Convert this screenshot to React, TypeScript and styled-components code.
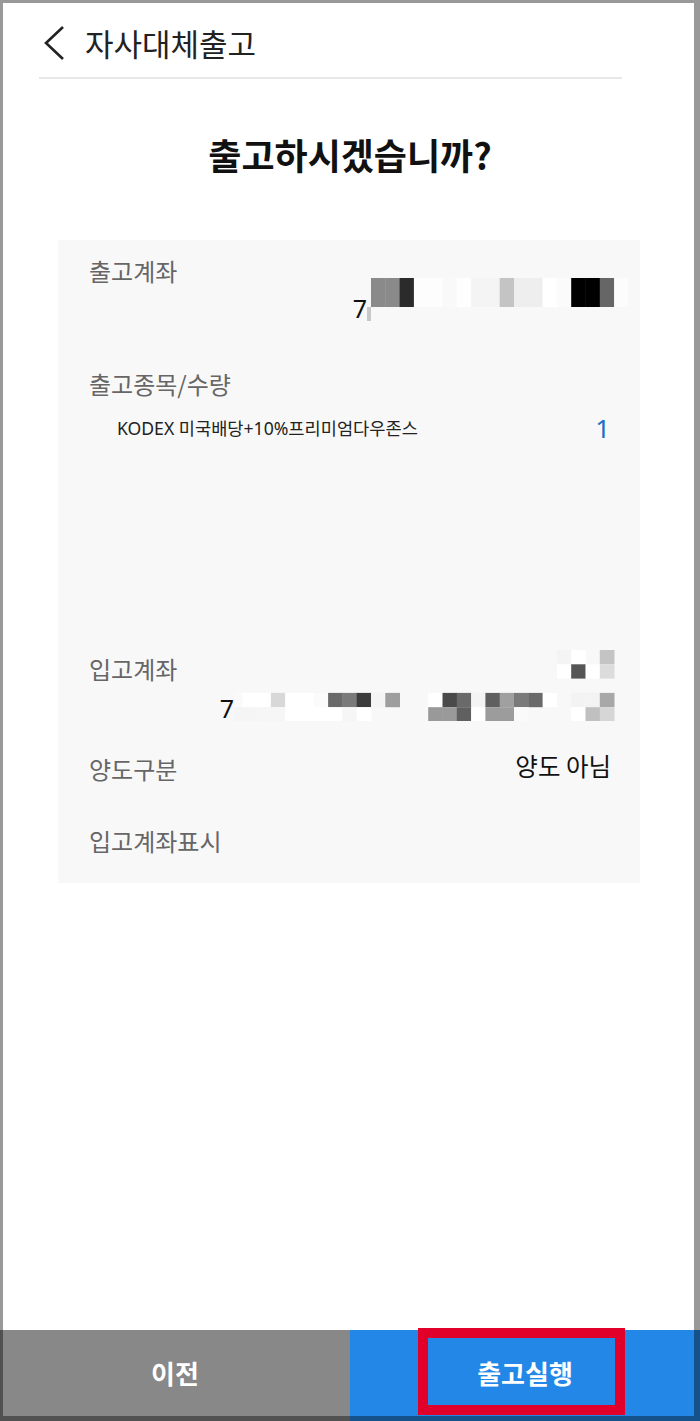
import styled, { createGlobalStyle } from 'styled-components';

const GlobalStyle = createGlobalStyle`
  html, body {
    margin: 0;
    padding: 0;
    background: #ffffff;
  }
  body {
    font-family: 'Noto Sans', 'Noto Sans CJK KR', sans-serif;
    color: #222222;
  }
  * {
    box-sizing: border-box;
  }
`;

type Cell = [number, number, string];

// censor mosaics, cells on a 14.3px grid
const CELL = 14.3;

const sentMosaic: Cell[] = [
  [4, 0, '#8a8a8a'],
  [4 + CELL, 0, '#8a8a8a'],
  [4 + CELL * 2, 0, '#2b2b2b'],
  [4 + CELL * 3, 0, '#fdfdfd'],
  [4 + CELL * 4, 0, '#fdfdfd'],
  [4 + CELL * 5, 0, '#f9f9f9'],
  [4 + CELL * 6, 0, '#fefefe'],
  [4 + CELL * 7, 0, '#f4f4f4'],
  [4 + CELL * 8, 0, '#f4f4f4'],
  [4 + CELL * 9, 0, '#c4c4c4'],
  [4 + CELL * 10, 0, '#eeeeee'],
  [4 + CELL * 11, 0, '#eeeeee'],
  [4 + CELL * 12, 0, '#ffffff'],
  [4 + CELL * 13, 0, '#fbfbfb'],
  [4 + CELL * 14, 0, '#000000'],
  [4 + CELL * 15, 0, '#000000'],
  [4 + CELL * 16, 0, '#666666'],
  [4 + CELL * 17, 0, '#fcfcfc'],
];

const recvCols = (c: number) => 8.3 + CELL * c;

const recvMosaic: Cell[] = [
  // two small rows at the top right
  [recvCols(22), 0, '#f4f4f4'],
  [recvCols(23), 0, '#ffffff'],
  [recvCols(25), 0, '#c4c4c4'],
  [recvCols(22), CELL, '#ffffff'],
  [recvCols(23), CELL, '#555555'],
  [recvCols(24), CELL, '#ffffff'],
  [recvCols(25), CELL, '#dcdcdc'],
  // first main row
  [recvCols(-1), CELL * 3, '#fafafa'],
  [recvCols(0), CELL * 3, '#ffffff'],
  [recvCols(1), CELL * 3, '#ffffff'],
  [recvCols(2), CELL * 3, '#d8d8d8'],
  [recvCols(3), CELL * 3, '#ffffff'],
  [recvCols(4), CELL * 3, '#ffffff'],
  [recvCols(5), CELL * 3, '#fbfbfb'],
  [recvCols(6), CELL * 3, '#6a6a6a'],
  [recvCols(7), CELL * 3, '#7a7a7a'],
  [recvCols(8), CELL * 3, '#3c3c3c'],
  [recvCols(9), CELL * 3, '#f4f4f4'],
  [recvCols(10), CELL * 3, '#9e9e9e'],
  [recvCols(13), CELL * 3, '#ffffff'],
  [recvCols(14), CELL * 3, '#4a4a4a'],
  [recvCols(15), CELL * 3, '#6a6a6a'],
  [recvCols(16), CELL * 3, '#f4f4f4'],
  [recvCols(17), CELL * 3, '#5f5f5f'],
  [recvCols(18), CELL * 3, '#a0a0a0'],
  [recvCols(19), CELL * 3, '#7a7a7a'],
  [recvCols(20), CELL * 3, '#6a6a6a'],
  [recvCols(21), CELL * 3, '#ffffff'],
  [recvCols(22), CELL * 3, '#f8f8f8'],
  [recvCols(23), CELL * 3, '#f3f3f3'],
  [recvCols(24), CELL * 3, '#f3f3f3'],
  [recvCols(25), CELL * 3, '#a8a8a8'],
  // second main row
  [recvCols(-1), CELL * 4, '#f5f5f5'],
  [recvCols(0), CELL * 4, '#f5f5f5'],
  [recvCols(1), CELL * 4, '#f6f6f6'],
  [recvCols(2), CELL * 4, '#f6f6f6'],
  [recvCols(3), CELL * 4, '#ffffff'],
  [recvCols(4), CELL * 4, '#ffffff'],
  [recvCols(5), CELL * 4, '#ffffff'],
  [recvCols(6), CELL * 4, '#ffffff'],
  [recvCols(7), CELL * 4, '#f6f6f6'],
  [recvCols(8), CELL * 4, '#ffffff'],
  [recvCols(13), CELL * 4, '#999999'],
  [recvCols(14), CELL * 4, '#9a9a9a'],
  [recvCols(15), CELL * 4, '#606060'],
  [recvCols(16), CELL * 4, '#ffffff'],
  [recvCols(17), CELL * 4, '#9c9c9c'],
  [recvCols(18), CELL * 4, '#9c9c9c'],
  [recvCols(19), CELL * 4, '#fafafa'],
  [recvCols(23), CELL * 4, '#ffffff'],
  [recvCols(24), CELL * 4, '#c0c0c0'],
  [recvCols(25), CELL * 4, '#d6d6d6'],
];

function Mosaic({ cells, width, height, rowH, extra }: { cells: Cell[]; width: number; height: number; rowH: number; extra?: React.ReactNode }) {
  return (
    <svg width={width} height={height} viewBox={`0 0 ${width} ${height}`} style={{ display: 'block' }}>
      {cells.map(([x, y, fill], i) => (
        <rect key={i} x={x} y={y} width={CELL + 0.4} height={rowH} fill={fill} />
      ))}
      {extra}
    </svg>
  );
}

export default function App() {
  return (
    <Page>
      <GlobalStyle />
      <Header>
        <BackButton aria-label='뒤로'>
          <svg width='24' height='36' viewBox='0 0 24 36'>
            <path d='M20 2 L3 18 L20 34' fill='none' stroke='#222' strokeWidth='2.6' />
          </svg>
        </BackButton>
        <HeaderTitle>자사대체출고</HeaderTitle>
      </Header>

      <Question>출고하시겠습니까?</Question>

      <Card>
        <Label>출고계좌</Label>
        <AccountRow $top={-9}>
          <AccountHead>7</AccountHead>
          <Mosaic
            cells={sentMosaic}
            width={261}
            height={43}
            rowH={29}
            extra={<rect x={0} y={29} width={4} height={14} fill='#c8c8c8' />}
          />
        </AccountRow>

        <Label $gap={47}>출고종목/수량</Label>
        <StockRow>
          <StockName>KODEX 미국배당+10%프리미엄다우존스</StockName>
          <StockQty>1</StockQty>
        </StockRow>

        <Label $gap={210}>입고계좌</Label>
        <AccountRow $top={-35}>
          <AccountHead>7</AccountHead>
          <Mosaic cells={recvMosaic} width={394} height={71} rowH={CELL} />
        </AccountRow>

        <InlineField $gap={32}>
          <Label>양도구분</Label>
          <InlineValue>양도 아님</InlineValue>
        </InlineField>

        <Label $gap={40}>입고계좌표시</Label>
      </Card>

      <BottomBar>
        <BarButton $variant='prev'>이전</BarButton>
        <BarButton $variant='run'>출고실행</BarButton>
        <Highlight />
      </BottomBar>

      <Frame />
    </Page>
  );
}

const Page = styled.div`
  position: relative;
  width: 100%;
  height: 100vh;
  display: flex;
  flex-direction: column;
  background: #ffffff;
`;

const Header = styled.div`
  margin-left: 39px;
  width: 583px;
  display: flex;
  align-items: center;
  gap: 18px;
  padding: 23px 0 14px 0;
  border-bottom: 2px solid #e8e8e8;
`;

const BackButton = styled.button`
  margin-left: 4px;
  padding: 0;
  border: none;
  background: none;
  display: flex;
  align-items: center;
`;

const HeaderTitle = styled.h1`
  margin: 0;
  font-family: 'Noto Sans CJK KR', sans-serif;
  font-size: 31px;
  line-height: 40px;
  font-weight: 400;
  color: #222222;
`;

const Question = styled.h2`
  margin: 54px 0 0 0;
  text-align: center;
  font-family: 'Noto Sans CJK KR', sans-serif;
  font-size: 36px;
  line-height: 42px;
  font-weight: 700;
  color: #111111;
`;

const Card = styled.section`
  margin: 65px 0 0 58px;
  width: 582px;
  padding: 15px 29px 26px 31px;
  background: #f8f8f8;
  display: flex;
  flex-direction: column;
`;

const Label = styled.div<{ $gap?: number }>`
  margin-top: ${(p) => p.$gap ?? 0}px;
  font-family: 'Noto Sans CJK KR', sans-serif;
  font-size: 24px;
  line-height: 32px;
  color: #666666;
`;

const AccountRow = styled.div<{ $top: number }>`
  margin-top: ${(p) => p.$top}px;
  margin-right: -17px;
  display: flex;
  justify-content: flex-end;
  align-items: flex-end;
`;

const AccountHead = styled.span`
  font-family: 'Noto Sans', sans-serif;
  font-size: 25px;
  line-height: 25px;
  color: #111111;
`;

const StockRow = styled.div`
  margin-top: 13px;
  padding-left: 28px;
  display: flex;
  justify-content: space-between;
  align-items: center;
  line-height: 30px;
`;

const StockName = styled.span`
  font-family: 'Noto Sans', 'Noto Sans CJK KR', sans-serif;
  font-size: 17.6px;
  color: #222222;
`;

const StockQty = styled.span`
  margin-right: 1px;
  font-family: 'Noto Sans', sans-serif;
  font-size: 26px;
  color: #1a6fc4;
`;

const InlineField = styled.div<{ $gap: number }>`
  margin-top: ${(p) => p.$gap}px;
  display: flex;
  justify-content: space-between;
  align-items: flex-start;
`;

const InlineValue = styled.span`
  margin-top: -3px;
  font-family: 'Noto Sans CJK KR', sans-serif;
  font-size: 24.5px;
  line-height: 32px;
  color: #111111;
`;

const BottomBar = styled.div`
  position: relative;
  margin-top: auto;
  height: 91px;
  display: grid;
  grid-template-columns: 1fr 1fr;
`;

const BarButton = styled.button<{ $variant: 'prev' | 'run' }>`
  border: none;
  padding: 0 0 6px 0;
  background: ${(p) => (p.$variant === 'prev' ? '#888888' : '#2387e8')};
  color: #ffffff;
  font-family: 'Noto Sans CJK KR', sans-serif;
  font-size: 26px;
  font-weight: 700;
  display: flex;
  align-items: center;
  justify-content: center;
`;

const Highlight = styled.div`
  position: absolute;
  left: 418px;
  top: -2px;
  width: 207px;
  height: 87px;
  border: 10px solid #e0002a;
  pointer-events: none;
`;

const Frame = styled.div`
  position: absolute;
  inset: 0;
  border-style: solid;
  border-color: rgba(0, 0, 0, 0.4);
  border-width: 3px 6px 5px 3px;
  pointer-events: none;
`;
